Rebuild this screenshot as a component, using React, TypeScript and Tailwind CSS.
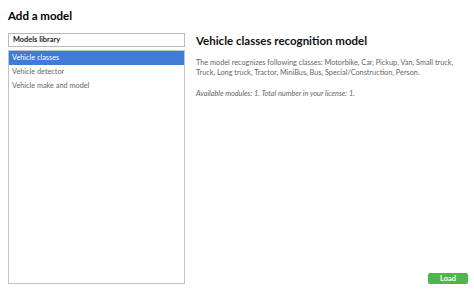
const font = { fontFamily: '"Segoe UI", Lato, "Open Sans", sans-serif' };

const models = ['Vehicle classes', 'Vehicle detector', 'Vehicle make and model'];

export default function App() {
  const selected = 0;
  return (
    <div
      className="flex h-[299px] w-[474px] flex-col overflow-hidden bg-white pb-[15px] pl-[8px] pr-[6px] pt-[8px] text-black"
      style={font}
    >
      <div className="text-[11.5px] font-bold leading-[16px]">Add a model</div>

      <div className="mt-[9px] flex min-h-0 flex-1 gap-[11px]">
        {/* left: library list */}
        <div className="flex w-[177px] flex-col gap-[3px]">
          <div className="h-[14px] border border-[#b9b9b9] px-[4px] text-[7.4px] font-bold leading-[12px] text-[#222]">
            Models library
          </div>
          <ul className="flex-1 border border-[#c3c3c3] text-[7.3px] leading-[14px] text-[#666]">
            {models.map((m, i) => (
              <li
                key={m}
                className={'h-[14px] px-[3px] ' + (i === selected ? 'bg-[#3f7bd7] text-white' : '')}
              >
                {m}
              </li>
            ))}
          </ul>
        </div>

        {/* right: description */}
        <div className="flex flex-1 flex-col">
          <div className="text-[11.5px] font-bold leading-[16px] text-[#111]">
            Vehicle classes recognition model
          </div>
          <div className="mt-[9px] text-[7.3px] leading-[10px] text-[#666]">
            The model recognizes following classes: Motorbike, Car, Pickup, Van, Small truck,
            Truck, Long truck, Tractor, MiniBus, Bus, Special/Construction, Person.
          </div>
          <div className="mt-[11px] text-[7.3px] italic leading-[10px] text-[#666]">
            Available modules: 1. Total number in your license: 1.
          </div>
          <button className="mt-auto h-[11px] w-[40px] self-end rounded-[2px] bg-[#4cb74c] text-[7.5px] font-bold leading-[11px] text-white">
            Load
          </button>
        </div>
      </div>
    </div>
  );
}
